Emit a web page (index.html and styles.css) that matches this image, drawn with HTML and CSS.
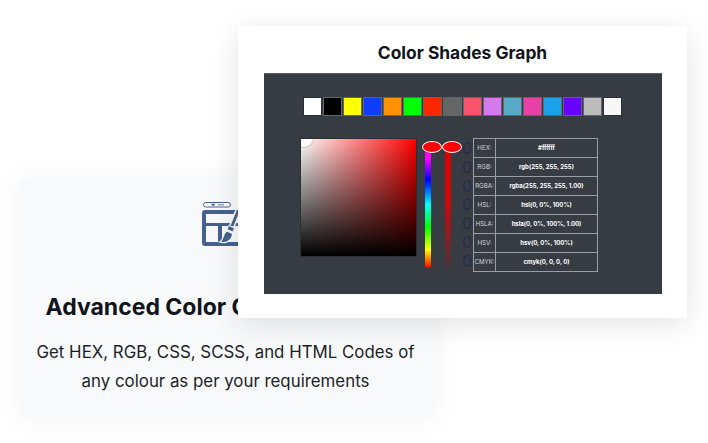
FILE: index.html
```html
<!DOCTYPE html>
<html lang="en">
<head>
<meta charset="utf-8">
<title>Color Shades Graph</title>
<link rel="stylesheet" href="styles.css">
</head>
<body>
<section class="card-back">
  <div class="logo-row">
    <svg class="logo" width="54" height="46" viewBox="0 0 54 46">
      <rect x="2.500" y="1.500" width="27" height="4.500" rx="2.250" fill="#fff" stroke="#46618f"/>
      <path d="M10.500 2.800h3.400v1l-1.700 1.400-1.700-1.400z" fill="#46618f"/>
      <rect x="17" y="3" width="6" height="1.500" fill="#9aa8c0"/>
      <path fill-rule="evenodd" fill="#46618f" d="M4 9h36a3 3 0 0 1 3 3v30a3 3 0 0 1-3 3H4a3 3 0 0 1-3-3V12a3 3 0 0 1 3-3zM5 13v9h34v-9zM5 25v16h12V25zM21 25v16h18V25z"/>
      <path d="M37 10L31 25" stroke="#f8f9fb" stroke-width="6" fill="none"/>
      <path d="M37 10L31 25" stroke="#46618f" stroke-width="2.800" fill="none"/>
      <path d="M27.500 24.500l6 2.500-1.500 4-6-2.500z" fill="#46618f" stroke="#f8f9fb"/>
      <path d="M18.500 41c4-1 3-9 7.500-11l5.500 2.500c0 6-6 11-13 8.500z" fill="#46618f" stroke="#f8f9fb" stroke-width="1.200"/>
    </svg>
  </div>
  <h2 class="back-title">Advanced Color Code Generator</h2>
  <p class="back-text">Get HEX, RGB, CSS, SCSS, and HTML Codes of any colour as per your requirements</p>
</section>

<section class="card-front">
  <h1 class="front-title">Color Shades Graph</h1>
  <div class="panel">
    <div class="swatches">
      <span class="swatch s-white"></span>
      <span class="swatch s-black"></span>
      <span class="swatch s-yellow"></span>
      <span class="swatch s-blue"></span>
      <span class="swatch s-orange"></span>
      <span class="swatch s-green"></span>
      <span class="swatch s-red"></span>
      <span class="swatch s-gray"></span>
      <span class="swatch s-coral"></span>
      <span class="swatch s-violet"></span>
      <span class="swatch s-teal"></span>
      <span class="swatch s-pink"></span>
      <span class="swatch s-sky"></span>
      <span class="swatch s-indigo"></span>
      <span class="swatch s-silver"></span>
      <span class="swatch s-snow"></span>
    </div>
    <div class="picker">
      <div class="sv"><span class="sv-thumb"></span></div>
      <div class="sliders">
        <div class="slider hue"><span class="thumb"></span></div>
        <div class="slider alpha"><span class="thumb"></span></div>
      </div>
      <div class="zeros">
        <span>0</span><span>0</span><span>0</span><span>0</span><span>0</span><span>0</span><span>0</span>
      </div>
      <table class="codes">
        <tr><th>HEX:</th><td>#ffffff</td></tr>
        <tr><th>RGB:</th><td>rgb(255, 255, 255)</td></tr>
        <tr><th>RGBA:</th><td>rgba(255, 255, 255, 1.00)</td></tr>
        <tr><th>HSL:</th><td>hsl(0, 0%, 100%)</td></tr>
        <tr><th>HSLA:</th><td>hsla(0, 0%, 100%, 1.00)</td></tr>
        <tr><th>HSV:</th><td>hsv(0, 0%, 100%)</td></tr>
        <tr><th>CMYK:</th><td>cmyk(0, 0, 0, 0)</td></tr>
      </table>
    </div>
  </div>
</section>
</body>
</html>
```
FILE: styles.css
```css
* { box-sizing: border-box; }
html, body { margin: 0; padding: 0; }
body {
  position: relative;
  width: 708px;
  height: 443px;
  overflow: hidden;
  background: #fff;
  font-family: Inter, "Liberation Sans", sans-serif;
}
.card-back {
  position: absolute;
  left: 21px;
  top: 180px;
  width: 413px;
  height: 237px;
  padding-top: 21px;
  background: #f8f9fb;
  box-shadow: 0 0 30px rgba(0, 0, 0, 0.06);
  text-align: center;
}
.logo-row { height: 46px; padding-left: 180px; text-align: left; }
.logo { display: block; }
.back-title {
  margin: 46px 0 0;
  font-size: 23px;
  line-height: 28px;
  font-weight: 700;
  color: #11141a;
  white-space: nowrap;
}
.back-text {
  margin: 17px 0 0;
  padding: 0 18px 0 14px;
  font-size: 16.850px;
  line-height: 29px;
  color: #1c1f26;
}
.card-front {
  position: absolute;
  left: 238px;
  top: 26px;
  width: 449px;
  height: 292px;
  padding: 16px 26px 0 26px;
  background: #fff;
  box-shadow: 0 6px 28px rgba(0, 0, 0, 0.11);
}
.front-title {
  margin: 0 0 9px;
  height: 22px;
  font-size: 17.400px;
  line-height: 22px;
  font-weight: 700;
  color: #11141a;
  text-align: center;
}
.panel {
  width: 398px;
  height: 221px;
  padding: 23px 0 0 39px;
  background: #373b42;
  border-top: 1px solid #5a5e64;
}
.swatches { display: flex; height: 20px; margin-left: -0.500px; }
.swatch {
  display: block;
  width: 19px;
  height: 19px;
  margin-right: 1.060px;
  border: 1px solid #62666c;
}
.s-white { background: #fff; border-color: #2c3036; }
.s-black { background: #000; }
.s-yellow { background: #ff0; }
.s-blue { background: #0f3cff; }
.s-orange { background: #ff9000; }
.s-green { background: #0f0; }
.s-red { background: #ff2600; }
.s-gray { background: #666; }
.s-coral { background: #f9546a; }
.s-violet { background: #d27aee; }
.s-teal { background: #5aa9c8; }
.s-pink { background: #e83fa8; }
.s-sky { background: #1aa3ea; }
.s-indigo { background: #6a00ff; }
.s-silver { background: #bcbcbc; }
.s-snow { background: #f7f7f7; border-color: #2c3036; }
.picker { display: flex; margin: 22px 0 0 -2px; }
.sv {
  position: relative;
  flex: none;
  width: 115px;
  height: 117px;
  overflow: hidden;
  background:
    linear-gradient(to bottom, transparent, #000),
    linear-gradient(to right, #fff, #f00);
  box-shadow: 0 0 0 1px #2c3036;
}
.sv-thumb {
  position: absolute;
  left: -6px;
  top: -10px;
  width: 18px;
  height: 18px;
  border-radius: 50%;
  background: #fff;
  box-shadow: 0 0 2px #888;
}
.sliders { flex: none; display: flex; gap: 14px; margin-left: 9px; padding-top: 7px; }
.slider { position: relative; width: 6px; height: 122px; border-radius: 0 0 3px 3px; }
.hue {
  background: linear-gradient(to bottom, #f0f 0%, #f0f 10%, #00f 28%, #0ff 48%, #0f0 67%, #ff0 85%, #f00 100%);
}
.alpha { background: linear-gradient(to bottom, #e00000 0%, #d00808 45%, rgba(200, 0, 0, 0.1) 100%); }
.thumb {
  position: absolute;
  left: -3.500px;
  top: -5px;
  width: 20px;
  height: 12px;
  border-radius: 50%;
  background: #f00;
  border: 1px solid #fff;
  box-shadow: 0 0 1px #222;
}
.zeros {
  flex: none;
  display: flex;
  flex-direction: column;
  width: 11px;
  margin-left: 11px;
  color: #262c50;
  font-size: 16px;
  line-height: 18.800px;
}
.zeros span { display: block; height: 18.800px; }
.codes {
  flex: none;
  align-self: flex-start;
  width: 125px;
  height: 133px;
  margin: -1px 0 0 0;
  border-collapse: collapse;
  table-layout: fixed;
  color: #fff;
  font-size: 6px;
  line-height: 8px;
  text-align: center;
}
.codes th, .codes td { height: 19px; padding: 0; border: 1px solid #9a9da1; white-space: nowrap; }
.codes th { width: 22px; font-size: 6.200px; font-weight: 400; color: #d4d5d7; }
.codes td { font-weight: 700; }
```
